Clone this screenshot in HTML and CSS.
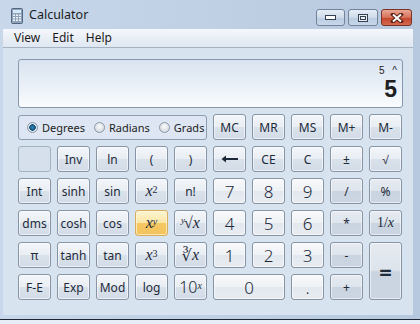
FILE: index.html
```html
<html>
<head>
<title>Calculator</title>
<link rel="stylesheet" href="styles.css">
</head>
<body>

<div class="window">
  <div class="titlebar">
    <svg class="appicon" width="12" height="16" viewBox="0 0 12 16">
      <rect x="0.5" y="0.5" width="11" height="15" rx="1" fill="#8ea3bb" stroke="#52667e"/>
      <rect x="2" y="2" width="8" height="3" fill="#d6ebfa"/>
      <g fill="#eef3f8">
        <rect x="2" y="6.5" width="2" height="1.5"/><rect x="5" y="6.5" width="2" height="1.5"/><rect x="8" y="6.5" width="2" height="1.5"/>
        <rect x="2" y="9" width="2" height="1.5"/><rect x="5" y="9" width="2" height="1.5"/><rect x="8" y="9" width="2" height="1.5"/>
        <rect x="2" y="11.5" width="2" height="1.5"/><rect x="5" y="11.5" width="2" height="1.5"/><rect x="8" y="11.5" width="2" height="1.5"/>
      </g>
    </svg>
    <span class="title">Calculator</span>
    <div class="caption">
      <span class="cap">
        <svg width="11" height="5" viewBox="0 0 11 5"><rect x="0.5" y="0.5" width="10" height="4" fill="#fff" stroke="#34404f"/></svg>
      </span>
      <span class="cap max">
        <svg width="10" height="8" viewBox="0 0 10 8"><rect x="0.5" y="0.5" width="9" height="7" fill="#e9eef4" stroke="#34404f"/><rect x="2.5" y="2.5" width="5" height="3" fill="none" stroke="#34404f"/></svg>
      </span>
      <span class="cap close">
        <svg width="14" height="10" viewBox="0 0 14 10">
          <path d="M3 1.5 L11 8.5 M11 1.5 L3 8.5" stroke="#5a2116" stroke-width="4" stroke-linecap="square"/>
          <path d="M3 1.5 L11 8.5 M11 1.5 L3 8.5" stroke="#fff" stroke-width="2"/>
        </svg>
      </span>
    </div>
  </div>

  <div class="frame">
    <div class="menu">
      <span>View</span><span>Edit</span><span>Help</span>
    </div>

    <div class="content">
      <div class="display">
        <div class="expr">5 <span class="caret">^</span></div>
        <div class="value">5</div>
      </div>

      <div class="keys">
        <div class="modes">
          <label class="radio"><span class="dot on"></span>Degrees</label>
          <label class="radio"><span class="dot"></span>Radians</label>
          <label class="radio"><span class="dot"></span>Grads</label>
        </div>
        <button class="btn">MC</button>
        <button class="btn">MR</button>
        <button class="btn">MS</button>
        <button class="btn">M+</button>
        <button class="btn">M-</button>

        <button class="btn blank"></button>
        <button class="btn">Inv</button>
        <button class="btn">ln</button>
        <button class="btn">(</button>
        <button class="btn">)</button>
        <button class="btn"><svg width="18" height="8" viewBox="0 0 18 8"><path d="M17 4 H4" stroke="#1c2838" stroke-width="2"/><path d="M0.5 4 L5 0.5 V7.5 Z" fill="#1c2838"/></svg></button>
        <button class="btn">CE</button>
        <button class="btn">C</button>
        <button class="btn">&plusmn;</button>
        <button class="btn">&radic;</button>

        <button class="btn">Int</button>
        <button class="btn">sinh</button>
        <button class="btn">sin</button>
        <button class="btn math"><i>x</i><sup>2</sup></button>
        <button class="btn">n!</button>
        <button class="btn num">7</button>
        <button class="btn num">8</button>
        <button class="btn num">9</button>
        <button class="btn op">/</button>
        <button class="btn op">%</button>

        <button class="btn">dms</button>
        <button class="btn">cosh</button>
        <button class="btn">cos</button>
        <button class="btn math hot"><i>x</i><sup><i>y</i></sup></button>
        <button class="btn math"><sup class="idx"><i>y</i></sup>&radic;<i>x</i></button>
        <button class="btn num">4</button>
        <button class="btn num">5</button>
        <button class="btn num">6</button>
        <button class="btn op">*</button>
        <button class="btn op math small">1/<i>x</i></button>

        <button class="btn">&pi;</button>
        <button class="btn">tanh</button>
        <button class="btn">tan</button>
        <button class="btn math"><i>x</i><sup>3</sup></button>
        <button class="btn math">&#8731;<i>x</i></button>
        <button class="btn num">1</button>
        <button class="btn num">2</button>
        <button class="btn num">3</button>
        <button class="btn op">-</button>
        <button class="btn op equals">=</button>

        <button class="btn">F-E</button>
        <button class="btn">Exp</button>
        <button class="btn">Mod</button>
        <button class="btn">log</button>
        <button class="btn ten">10<sup><i>x</i></sup></button>
        <button class="btn num zero">0</button>
        <button class="btn num">.</button>
        <button class="btn op">+</button>
      </div>
    </div>
  </div>
</div>

</body>
</html>
```

FILE: styles.css
```css
body {
  margin: 0;
  background: #e6edf5;
  font-family: "Noto Sans", "Liberation Sans", sans-serif;
}
.window {
  width: 420px;
  height: 319px;
  border-bottom: 1px solid #1d2733;
  background: linear-gradient(to right, #c8d7ea, #b7c9df);
  display: flex;
  flex-direction: column;
}
.titlebar {
  height: 29px;
  display: flex;
  align-items: flex-start;
}
.appicon {
  margin: 8px 0 0 11px;
}
.title {
  margin: 6px 0 0 6px;
  font-size: 12.5px;
  color: #1b1b1b;
}
.caption {
  margin: 9px 8px 0 auto;
  display: flex;
  gap: 3px;
}
.cap {
  width: 29px;
  height: 17px;
  box-sizing: border-box;
  border: 1px solid #72839a;
  border-radius: 3px;
  display: flex;
  align-items: center;
  justify-content: center;
  background: linear-gradient(#e6edf6, #cfdbea 50%, #b9cbe0 51%, #c9d8ea);
}
.cap.max {
  width: 30px;
}
.cap.close {
  width: 31px;
  border-color: #7a3324;
  background: linear-gradient(#eaa796, #d77058 50%, #c4432b 51%, #d46a4f);
}
.frame {
  flex: 1;
  padding: 0 7px 4px 3px;
  display: flex;
  flex-direction: column;
}
.menu {
  height: 18px;
  border-bottom: 1px solid #a4b2c4;
  background: linear-gradient(#f4f7fb, #dfe7f1);
  display: flex;
  padding-left: 5px;
  font-size: 12px;
  line-height: 18px;
  color: #1b1b1b;
}
.menu span {
  padding: 0 6px;
}
.content {
  flex: 1;
  background: #d8e3f0;
  padding: 11px 10px 0 15px;
}
.display {
  height: 49px;
  box-sizing: border-box;
  border: 1px solid #8797ad;
  border-radius: 3px;
  background: linear-gradient(#d9e3f0, #eaf0f7 55%, #fafcfe);
  text-align: right;
  padding: 5px 5px 0 0;
  color: #1c1c1c;
  font-family: "Liberation Sans", sans-serif;
}
.expr {
  font-size: 10px;
  line-height: 11px;
  height: 11px;
}
.caret {
  margin-left: 5px;
}
.value {
  font-size: 23px;
  line-height: 26px;
  height: 26px;
  font-weight: bold;
  color: #202020;
}
.keys {
  margin-top: 6px;
  display: grid;
  grid-template-columns: repeat(10, 33px);
  grid-auto-rows: 26px;
  gap: 6px;
}
.modes {
  grid-column: 1 / span 5;
  box-sizing: border-box;
  border: 1px solid #8e9cb0;
  border-radius: 3px;
  background: #dde6f2;
  display: flex;
  align-items: center;
  padding-left: 8px;
  gap: 9px;
  font-size: 11px;
  color: #1c1c1c;
  margin-top: 1px;
}
.radio {
  display: flex;
  align-items: center;
  gap: 4px;
}
.dot {
  width: 11px;
  height: 11px;
  box-sizing: border-box;
  border-radius: 50%;
  border: 1px solid #8b98a8;
  background: radial-gradient(circle at 50% 40%, #fafbfc, #c9d0d8);
}
.dot.on {
  background: radial-gradient(circle, #2c88bd 0, #16507a 3px, #e6ebf0 3.6px, #c9d0d8 100%);
}
.btn {
  margin: 0;
  padding: 0;
  box-sizing: border-box;
  border: 1px solid #8794a5;
  border-radius: 3px;
  background: linear-gradient(#f3f6f9, #e9eef4 48%, #d9e1ea 52%, #d3dce7);
  box-shadow: inset 0 0 0 1px rgba(255, 255, 255, 0.55);
  font-family: "Noto Sans", "Liberation Sans", sans-serif;
  font-size: 12px;
  color: #1d2a3a;
  display: flex;
  align-items: center;
  justify-content: center;
}
.btn.blank {
  background: #d6e0ec;
  border-color: #a5b2c3;
  box-shadow: none;
}
.btn.num {
  font-size: 17px;
  font-weight: 300;
  background: linear-gradient(#f8f9fb, #eff2f6 48%, #e2e8ee 52%, #e8edf2);
}
.btn.op {
  background: linear-gradient(#e6ebf1, #dde4ec 48%, #cad4e0 52%, #ccd6e2);
}
.btn.hot {
  border-color: #d9ad5c;
  background: linear-gradient(#fdf4d0, #fbe6a6 48%, #f6c862 52%, #f3c25c);
  box-shadow: inset 0 0 0 1px rgba(255, 248, 220, 0.7);
}
.math {
  font-family: "Liberation Serif", "DejaVu Serif", serif;
  font-size: 16px;
}
.math sup, .ten sup {
  font-size: 10px;
  position: relative;
  top: -2px;
}
.math sup.idx {
  font-size: 9px;
  margin-right: -1px;
  top: -3px;
}
.math.small {
  font-size: 14px;
}
.ten {
  font-size: 16px;
  font-weight: 300;
}
.ten sup {
  font-family: "Liberation Serif", serif;
}
.equals {
  grid-column: 10;
  grid-row: 5 / span 2;
  font-size: 22px;
  font-weight: bold;
}
.zero {
  grid-column: 6 / span 2;
}
```
